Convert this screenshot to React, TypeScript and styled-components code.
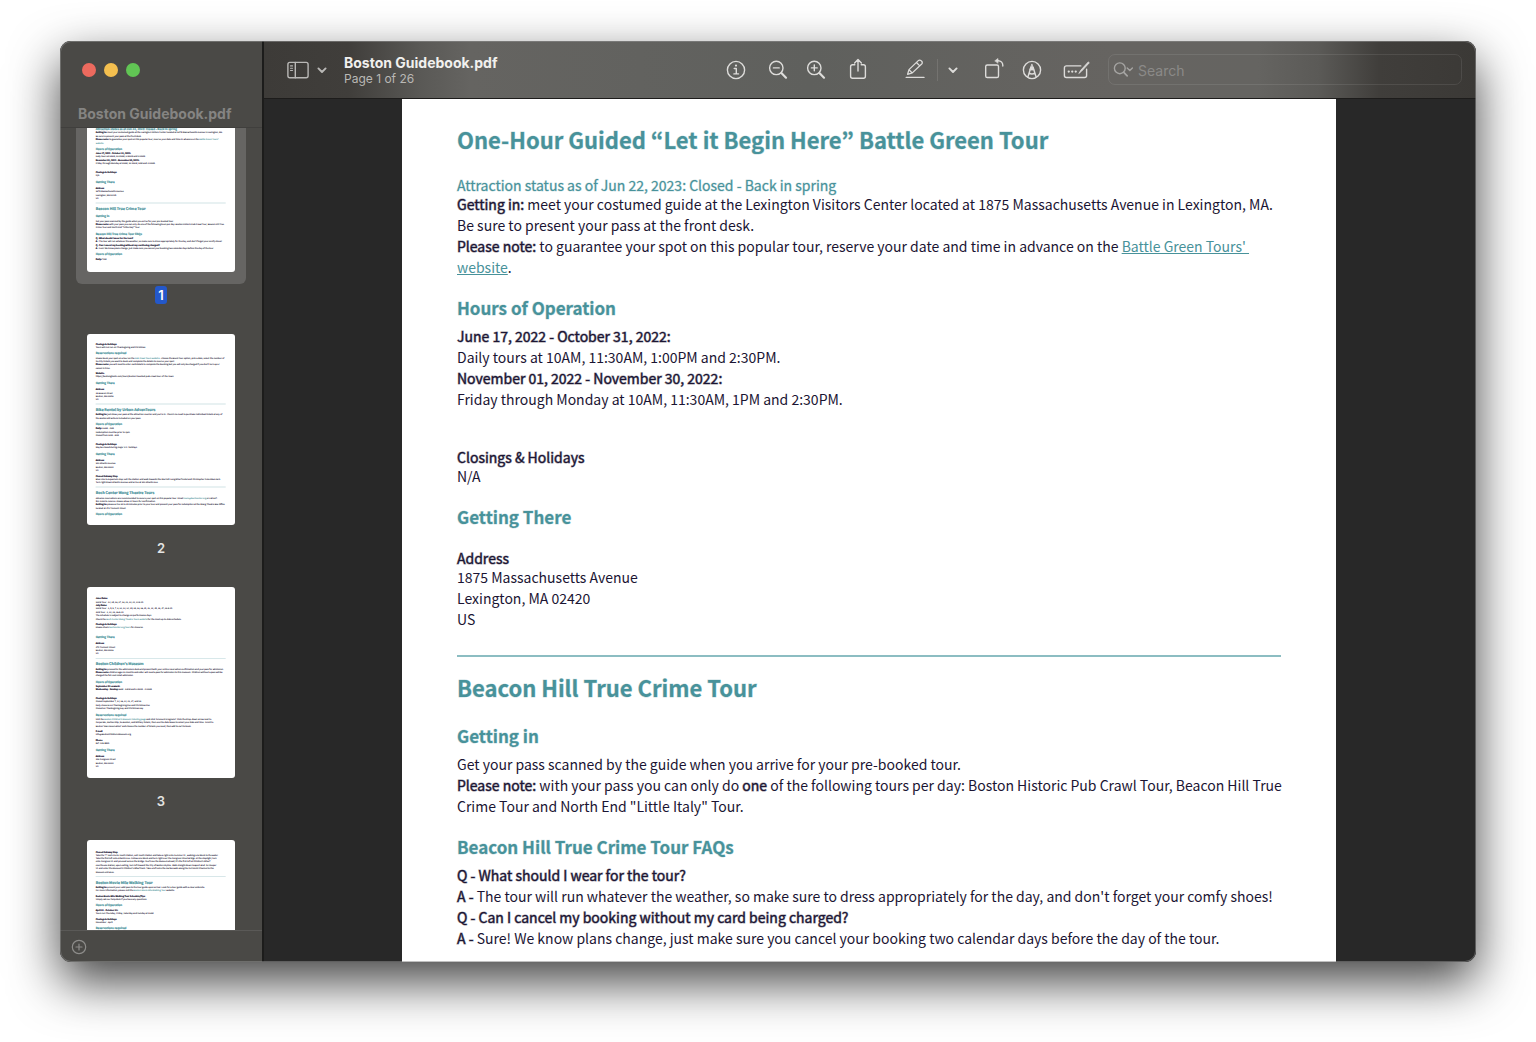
import React, { useLayoutEffect, useRef, useState } from "react";
import styled, { createGlobalStyle } from "styled-components";

const GlobalStyle = createGlobalStyle`
  * { box-sizing: border-box; }
  body { margin: 0; background: #fff; }
`;

const uiFont = `Inter, "Liberation Sans", sans-serif`;
const pageFont = `"Noto Sans CJK JP", "Noto Sans", sans-serif`;
const teal = "#48929a";
const ink = "#1b1533";

const Desktop = styled.div`
  height: 100vh;
  padding: 41px 60px 80px;
  font-family: ${uiFont};
  overflow: hidden;
`;

const Window = styled.div`
  position: relative;
  display: flex;
  height: 100%;
  border-radius: 11px;
  overflow: hidden;
  background: #282828;
`;

const Shadow = styled.div`
  height: 100%;
  border-radius: 11px;
  box-shadow: 0 20px 50px rgba(0, 0, 0, 0.74);
`;

const Rim = styled.div`
  position: absolute;
  inset: 0;
  border-radius: 11px;
  box-shadow: inset 0 0 0 1px rgba(140, 140, 140, 0.55);
  pointer-events: none;
`;

/* Sidebar */

const Sidebar = styled.aside`
  display: flex;
  flex-direction: column;
  flex: none;
  width: 204px;
  background: #4a4946;
  border-right: 2px solid #1c1c1b;
`;

const SidebarHeader = styled.header`
  display: flex;
  flex-direction: column;
  justify-content: space-between;
  height: 87px;
  padding: 22px 18px 3px;
  border-bottom: 1px solid #403f3d;
`;

const Lights = styled.div`
  display: flex;
  gap: 8px;
  padding-left: 4px;
`;

const Light = styled.button<{ $color: string }>`
  width: 14px;
  height: 14px;
  padding: 0;
  border: 0;
  border-radius: 50%;
  background: ${(p) => p.$color};
`;

const SidebarTitle = styled.div`
  font-size: 14px;
  font-weight: 700;
  line-height: 20px;
  color: #858482;
  white-space: nowrap;
`;

const ThumbList = styled.nav`
  flex: 1;
  min-height: 0;
  padding: 12px 16px 0 16px;
  overflow-y: auto;
  scrollbar-width: none;
`;

const ThumbItem = styled.button`
  display: flex;
  flex-direction: column;
  align-items: center;
  gap: 2px;
  width: 170px;
  height: 253px;
  padding: 0;
  border: 0;
  background: none;
  font-family: ${uiFont};
`;

const ThumbFrame = styled.span<{ $selected: boolean }>`
  display: block;
  width: 100%;
  padding: 12px 11px;
  border-radius: 6px;
  background: ${(p) => (p.$selected ? "#666563" : "transparent")};
`;

const ThumbPaper = styled.svg`
  display: block;
  width: 148px;
  height: 191px;
  border-radius: 3px;
  background: #fff;
  font-family: ${pageFont};
  text-rendering: geometricPrecision;
`;

const ThumbNumber = styled.span<{ $selected: boolean }>`
  padding: 0 3px;
  border-radius: 3px;
  font-size: 13px;
  font-weight: 600;
  line-height: 18px;
  color: ${(p) => (p.$selected ? "#fff" : "#e4e4e3")};
  background: ${(p) => (p.$selected ? "#2458ca" : "transparent")};
`;

const SidebarFooter = styled.footer`
  display: flex;
  align-items: center;
  height: 32px;
  padding-left: 11px;
  border-top: 1px solid #5a5957;
`;

const PlainButton = styled.button`
  display: flex;
  padding: 0;
  border: 0;
  background: none;
  color: #8d8c8a;
`;

/* Toolbar */

const Main = styled.main`
  display: flex;
  flex-direction: column;
  flex: 1;
  min-width: 0;
`;

const Toolbar = styled.header`
  display: flex;
  align-items: center;
  flex: none;
  height: 58px;
  padding: 0 14px 0 22px;
  border-bottom: 1px solid #1d1c1b;
  background: linear-gradient(
    90deg,
    #3d3b38 0%,
    #403e3b 7%,
    #5a5956 13%,
    #656461 17%,
    #5f605d 45%,
    #666461 70%,
    #656461 82%,
    #5b5a57 87%,
    #403e3b 92%,
    #3b3936 100%
  );
`;

const IconButton = styled.button<{ $width?: number }>`
  display: flex;
  align-items: center;
  justify-content: center;
  flex: none;
  width: ${(p) => p.$width ?? 24}px;
  height: 24px;
  padding: 0;
  border: 0;
  background: none;
  color: #dddcda;
`;

const ViewMenu = styled.div`
  display: flex;
  align-items: center;
  gap: 4px;

  button { color: #b9b8b6; }
`;

const DocName = styled.div`
  display: flex;
  flex-direction: column;
  padding-left: 14px;
  white-space: nowrap;
`;

const DocTitle = styled.span`
  font-size: 14px;
  font-weight: 700;
  line-height: 18px;
  color: #f1f0ee;
`;

const DocPage = styled.span`
  font-size: 12px;
  line-height: 14px;
  color: #b9b8b5;
`;

const Tools = styled.div`
  display: flex;
  align-items: center;
  gap: 18px;
  margin-left: auto;
  margin-right: 18px;
`;

const ToolPair = styled.div<{ $spaced?: boolean }>`
  display: flex;
  align-items: center;
  gap: 14px;
  margin-left: ${(p) => (p.$spaced ? 3 : 0)}px;
`;

const EditTools = styled.div`
  display: flex;
  align-items: center;
  gap: 7px;
  margin-left: 15px;
`;

const ToolDivider = styled.span`
  width: 1px;
  height: 22px;
  margin-left: 3px;
  background: #747370;
`;

const SearchBox = styled.label`
  display: flex;
  align-items: center;
  gap: 4px;
  flex: 0 1 354px;
  height: 31px;
  padding-left: 4px;
  border: 1px solid rgba(255, 255, 255, 0.09);
  border-radius: 7px;
  color: #a5a4a2;
`;

const SearchInput = styled.input`
  flex: 1;
  min-width: 0;
  padding: 3px 0 0;
  border: 0;
  outline: 0;
  background: none;
  color: #e8e7e5;
  font-family: ${uiFont};
  font-size: 14px;
  line-height: 20px;
  &::placeholder { color: #8b8a88; opacity: 1; }
`;

/* Document */

const Viewer = styled.div`
  flex: 1;
  min-height: 0;
  padding: 0 140px 0 138px;
  overflow-y: auto;
  scrollbar-width: none;
  background: #282828;
`;

const Page = styled.article`
  min-height: 100%;
  padding: 25px 55px 10px;
  background: #fff;
  color: ${ink};
  font-family: ${pageFont};
  font-size: 14px;
  line-height: 21px;
`;

/* The document sets its emphasis as thickened letters. */

const AttractionTitle = styled.h2`
  margin: 0;
  font-size: 22px;
  font-weight: 700;
  line-height: 30px;
  color: ${teal};
  -webkit-text-stroke: 1px rgba(72, 146, 154, 0.3);
`;

const SectionTitle = styled.h3`
  margin: 18px 0 6px;
  font-size: 17px;
  font-weight: 700;
  line-height: 24px;
  color: ${teal};
  -webkit-text-stroke: 1px rgba(72, 146, 154, 0.3);
`;

const Strong = styled.b`
  font-weight: 400;
  -webkit-text-stroke: 1px rgba(27, 21, 51, 0.5);
`;

const Status = styled.p`
  margin: 22px 0 0;
  line-height: 18px;
  color: ${teal};
  -webkit-text-stroke: 1px rgba(72, 146, 154, 0.3);
`;

const Label = styled.h4<{ $gap: number }>`
  margin: ${(p) => p.$gap}px 0 0;
  font-size: 14px;
  line-height: 18px;
`;

const Text = styled.p`
  margin: 0;
  white-space: nowrap;
`;

const Link = styled.a`
  color: ${teal};
  text-decoration: underline;
`;

const Rule = styled.hr`
  height: 2px;
  margin: 25px 0 15px;
  border: 0;
  background: #8cbdc2;
`;

const IntroTitle = styled(SectionTitle)`
  margin-top: 22px;
`;

/* Icons */

const line = { fill: "none", stroke: "currentColor", strokeWidth: 1.4, strokeLinecap: "round", strokeLinejoin: "round" } as const;

const Icon = ({ w = 24, h = 24, children }: { w?: number; h?: number; children: React.ReactNode }) => (
  <svg width={w} height={h} viewBox={`0 0 ${w} ${h}`} {...line} aria-hidden="true">{children}</svg>
);

const Chevron = () => (
  <Icon w={12}><path d="M2.4 10.4 6 14l3.6-3.6" strokeWidth={1.9} /></Icon>
);

const SidebarIcon = () => (
  <Icon>
    <rect x="1.9" y="4.4" width="20.2" height="15.4" rx="2" />
    <path d="M9.3 4.4v15.4" />
    <path d="M4.5 7.9h2M4.5 10.2h2M4.5 12.5h2" strokeWidth={1.1} />
  </Icon>
);

const InfoIcon = () => (
  <Icon>
    <circle cx="12" cy="12" r="8.6" />
    <path d="M10.2 10.5h2.1v5.3M9.9 15.9h4.6" />
    <circle cx="12" cy="7.6" r="1.1" fill="currentColor" stroke="none" />
  </Icon>
);

const ZoomIcon = ({ plus }: { plus?: boolean }) => (
  <Icon>
    <circle cx="10.3" cy="9.9" r="6.7" />
    <path d="M7.4 9.9h5.8" />
    {plus && <path d="M10.3 7v5.8" />}
    <path d="m15.4 15 4.6 4.7" strokeWidth={2.2} />
  </Icon>
);

const ShareIcon = () => (
  <Icon>
    <path d="M8.8 6.7H6.6a2 2 0 0 0-2 2v9.5a2 2 0 0 0 2 2h10.8a2 2 0 0 0 2-2V8.7a2 2 0 0 0-2-2h-2.2" />
    <path d="M12 13V1.7M8.6 5 12 1.6 15.4 5" />
  </Icon>
);

const HighlightIcon = () => (
  <Icon>
    <path d="M3.2 19.4h17.8" />
    <path d="M4.6 16.3 6 11.6 15.3 2.6a1.9 1.9 0 0 1 2.7 0l.7.7a1.9 1.9 0 0 1 0 2.7L9.3 14.9ZM6 11.7l3.2 3.2M13.4 4.5l3.4 3.4" strokeWidth={1.3} />
  </Icon>
);

const RotateIcon = () => (
  <Icon>
    <rect x="3.7" y="7" width="12.8" height="12.5" rx="1.6" />
    <path d="M14.8 2.7h1.4a4.6 4.6 0 0 1 4.6 4.6v.8" />
    <path d="m13 2.7 3-2.2v4.4Z" fill="currentColor" strokeWidth={0.6} />
  </Icon>
);

const MarkupIcon = () => (
  <Icon>
    <circle cx="12" cy="12" r="8.6" />
    <path d="m7.8 19.2 3.1-10M16.2 19.2l-3.1-10M9.3 15.2c1.6 1 3.8 1 5.4 0" />
    <path d="M12 6.3 13.9 12h-3.8Z" fill="currentColor" strokeWidth={0.8} />
  </Icon>
);

const SignIcon = () => (
  <Icon w={28}>
    <path d="M18.8 7.9H4.4a2 2 0 0 0-2 2v7.6a2 2 0 0 0 2 2h18.2a2 2 0 0 0 2-2v-6.2" />
    <path d="M6.7 13.6h.1M10.2 13.6h.1M13.7 13.6h.1" strokeWidth={2.2} />
    <path d="m17 15.2 1.9-3.1 7.4-8.2 1 .9-7.6 8.3Z" fill="currentColor" strokeWidth={0.8} />
  </Icon>
);

const SearchIcon = () => (
  <Icon w={21} h={18}>
    <circle cx="6.8" cy="7.3" r="5.4" />
    <path d="m10.8 11.3 3.4 3.6" strokeWidth={1.7} />
    <path d="m14.2 6.9 2.6 2.6 2.6-2.6" />
  </Icon>
);

const AddIcon = () => (
  <Icon w={16} h={16}>
    <circle cx="8" cy="8" r="6.7" strokeWidth={1.2} />
    <path d="M8 5v6M5 8h6" strokeWidth={1.2} />
  </Icon>
);

/* Thumbnails: each entry is one printed line of the page, three units to a pixel. */

type Kind = "title" | "section" | "bold" | "text" | "rule";
type Row = [y: number, kind: Kind, body: string, lead?: string, link?: string, rest?: string];

const pages: Row[][] = [
  [
    [147, "section", "Attraction status as of Jun 22, 2023: Closed - Back in spring"],
    [156, "text", "meet your costumed guide at the Lexington Visitors Center located at 1875 Massachusetts Avenue in Lexington, MA.", "Getting in: "],
    [166, "text", "Be sure to present your pass at the front desk."],
    [176, "text", "to guarantee your spot on this popular tour, reserve your date and time in advance on the ", "Please note: ", "Battle Green Tours'"],
    [187, "text", "", "", "website."],
    [206, "section", "Hours of Operation"],
    [218, "bold", "June 17, 2022 - October 31, 2022:"],
    [228, "text", "Daily tours at 10AM, 11:30AM, 1:00PM and 2:30PM."],
    [238, "bold", "November 01, 2022 - November 30, 2022:"],
    [248, "text", "Friday through Monday at 10AM, 11:30AM, 1PM and 2:30PM."],
    [276, "bold", "Closings & Holidays"],
    [285, "text", "N/A"],
    [304, "section", "Getting There"],
    [323, "bold", "Address"],
    [333, "text", "1875 Massachusetts Avenue"],
    [343, "text", "Lexington, MA 02420"],
    [353, "text", "US"],
    [366, "rule", ""],
    [386, "title", "Beacon Hill True Crime Tour"],
    [408, "section", "Getting in"],
    [421, "text", "Get your pass scanned by the guide when you arrive for your pre-booked tour."],
    [431, "text", "with your pass you can only do one of the following tours per day: Boston Historic Pub Crawl Tour, Beacon Hill True", "Please note: "],
    [441, "text", "Crime Tour and North End \"Little Italy\" Tour."],
    [460, "section", "Beacon Hill True Crime Tour FAQs"],
    [473, "bold", "Q - What should I wear for the tour?"],
    [483, "text", "The tour will run whatever the weather, so make sure to dress appropriately for the day, and don't forget your comfy shoes!", "A - "],
    [493, "bold", "Q - Can I cancel my booking without my card being charged?"],
    [503, "text", "Sure! We know plans change, just make sure you cancel your booking two calendar days before the day of the tour.", "A - "],
    [522, "section", "Hours of Operation"],
    [535, "text", "7PM", "Daily: "],
  ],
  [
    [32, "bold", "Closings & Holidays"],
    [42, "text", "Tours will not run on Thanksgiving and Christmas."],
    [60, "section", "Reservations required"],
    [73, "text", "Please book your spot on a tour on the ", "", "Pub Crawl Tours website", " - choose the Book Tour option, pick a date, select the number of"],
    [83, "text", "Go City tickets you want to book and complete the details to reserve your spot."],
    [93, "text", "you will need to enter card details to complete the booking but you will only be charged if you don't turn up or", "Please note: "],
    [103, "text", "cancel in time."],
    [120, "bold", "Website"],
    [129, "text", "https://bostonghosts.com/tours/boston-haunted-pub-crawl-tour-of-the-town"],
    [149, "section", "Getting There"],
    [168, "bold", "Address"],
    [178, "text", "28 Beacon Street"],
    [188, "text", "Boston, MA 02108"],
    [198, "text", "US"],
    [210, "rule", ""],
    [231, "title", "Bike Rental by Urban AdvenTours"],
    [243, "text", "just show your pass at the attraction counter and you're in - there's no need to purchase individual tickets at any of", "Getting in: "],
    [254, "text", "the Boston attractions included on your pass."],
    [273, "section", "Hours of Operation"],
    [285, "text", "11AM - 4PM", "Daily: "],
    [296, "text", "Redemption must be prior to 4pm"],
    [306, "text", "Closed from 1PM - 2PM"],
    [333, "bold", "Closings & Holidays"],
    [342, "text", "May be closed during major U.S. holidays"],
    [361, "section", "Getting There"],
    [381, "bold", "Address"],
    [390, "text", "103 Atlantic Avenue"],
    [400, "text", "Boston, MA 02110"],
    [410, "text", "US"],
    [427, "bold", "Closest Subway Stop"],
    [436, "text", "Blue Line to Aquarium stop: exit the station and walk towards the Marriott Long Wharf Hotel and Christopher Columbus Park."],
    [447, "text", "Turn right down Atlantic Avenue and arrive at 103 Atlantic Ave."],
    [459, "rule", ""],
    [480, "title", "Boch Center Wang Theatre Tours"],
    [493, "text", "Advance reservations are recommended to secure your spot on this popular tour. Email ", "", "tours@bochcenter.org", " or call 617-"],
    [503, "text", "532-1282 to reserve. Please allow 24 hours for confirmation."],
    [513, "text", "please arrive 10 to 15 minutes prior to your tour and present your pass for redemption at the Wang Theatre Box Office", "Getting in: "],
    [523, "text", "located at 270 Tremont Street."],
    [542, "section", "Hours of Operation"],
  ],
  [
    [36, "bold", "June Dates"],
    [46, "text", "12PM Tour - 14, 15, 16, 17, 18, 21, 22, 23, 24 & 30"],
    [56, "bold", "July Dates"],
    [66, "text", "12PM Tour - 1, 5, 6, 7, 8, 12, 13, 14, 15, 16, 18, 19, 20, 21, 22, 25, 26, 27, 28 & 30"],
    [76, "text", "2PM Tour - 2, 23, 28, 29 & 30"],
    [87, "text", "The schedule is subject to change on performance days."],
    [97, "text", "Check the ", "", "Boch Center Wang Theatre Tours website", " for the most up-to-date schedule."],
    [113, "bold", "Closings & Holidays"],
    [123, "text", "Please check ", "", "bochcenter.org/tours", " for closures."],
    [151, "section", "Getting There"],
    [171, "bold", "Address"],
    [181, "text", "270 Tremont Street"],
    [191, "text", "Boston, MA 02116"],
    [201, "text", "US"],
    [214, "rule", ""],
    [234, "title", "Boston Children's Museum"],
    [247, "text", "proceed to the admissions desk and present both your online reservation confirmation and your pass for admission.", "Getting in: "],
    [257, "text", "children ages 11 months and older will need a pass for admission to this museum. Children without a pass will be", "Please note: "],
    [267, "text", "charged the full-cost retail admission."],
    [286, "section", "Hours of Operation"],
    [298, "bold", "September 01 onward:"],
    [309, "text", "9AM - 12PM and 1:30PM - 4:30PM", "Wednesday - Sunday: "],
    [336, "bold", "Closings & Holidays"],
    [345, "text", "Closed September 7, 14, 19, 24, 21, 27, and 28"],
    [355, "text", "Early closures on Thanksgiving Eve and Christmas Eve"],
    [366, "text", "Closed on Thanksgiving Day and Christmas Day"],
    [385, "section", "Reservations required"],
    [398, "text", "Visit the ", "", "Boston Children's Museum ticketing page", " and click 'Discount Programs'. Click the drop-down arrow next to"],
    [408, "text", "Corporate, Partnership, Go Boston, and Military tickets, then use the date boxes to select your date and time. Scroll to"],
    [418, "text", "Boston 'Pass Reservation' and choose the number of tickets you need, then add to cart to book."],
    [435, "bold", "E-mail"],
    [444, "text", "Info@BostonChildrensMuseum.org"],
    [461, "bold", "Phone"],
    [471, "text", "617-426-6500"],
    [490, "section", "Getting There"],
    [509, "bold", "Address"],
    [519, "text", "308 Congress Street"],
    [529, "text", "Boston, MA 02210"],
    [539, "text", "US"],
  ],
  [
    [37, "bold", "Closest Subway Stop"],
    [46, "text", "Take the 'T' Red Line to South Station, exit South Station and take a right onto Summer St., walking one block to the water."],
    [56, "text", "Take the first left onto Atlantic Ave. Follow one block and turn right over the Congress Street Bridge. At the stoplight, turn"],
    [66, "text", "onto Congress St. and proceed across the bridge. You'll see the Museum ahead; it's the first left at Children's Wharf"],
    [76, "text", "courthouse station; upon exiting, turn left toward the City of Boston skyline. Walk straight down Seaport Blvd. to Sleeper"],
    [86, "text", "St. and enter the Museum's Children's Wharf Park. Take a left onto the Harborwalk along the Fort Point Channel to the"],
    [97, "text", "Museum entrance."],
    [110, "rule", ""],
    [131, "title", "Boston Movie Mile Walking Tour"],
    [143, "text", "present your valid pass to the tour guide upon arrival. Look for a tour guide with a clear umbrella.", "Getting in: "],
    [153, "text", "For more information, please visit the ", "", "Boston Movie Mile Walking Tour", " website."],
    [170, "bold", "Boston Movie Mile Walking Tour Schedule/Tips"],
    [179, "text", "Simply ask our help desk if you have any questions."],
    [198, "section", "Hours of Operation"],
    [211, "bold", "April 01 - October 31:"],
    [221, "text", "Tours run Thursday, Friday, Saturday and Sunday at 11AM"],
    [238, "bold", "Closings & Holidays"],
    [247, "text", "November - April"],
    [266, "section", "Reservations required"],
  ],
];

const size: Record<Kind, number> = { title: 22, section: 17, bold: 13, text: 13, rule: 0 };

const Thumbnail = ({ rows }: { rows: Row[] }) => (
  <ThumbPaper viewBox="0 0 888 1146" aria-hidden="true">
    {rows.map(([y, kind, body, lead, link, rest]) => {
      if (kind === "rule") {
        return <path key={y} d={`M52 ${y * 2}h780`} stroke={teal} strokeWidth="3" opacity="0.5" />;
      }
      const color = kind === "title" || kind === "section" ? teal : ink;
      return (
        <text
          key={y}
          x="52"
          y={y * 2 + 1}
          fontSize={size[kind]}
          fontWeight={kind === "text" ? 400 : 700}
          fill={color}
          stroke={color}
          strokeWidth={kind === "text" ? 0.4 : 1}
        >
          {lead && <tspan fontWeight="700" strokeWidth="1">{lead}</tspan>}
          {body}
          {link && <tspan fill={teal} stroke={teal}>{link}</tspan>}
          {rest}
        </text>
      );
    })}
  </ThumbPaper>
);

export default function App() {
  const list = useRef<HTMLElement>(null);
  const [selected, setSelected] = useState(0);

  useLayoutEffect(() => {
    if (list.current) list.current.scrollTop = 71;
  }, []);

  return (
    <Desktop>
      <GlobalStyle />
      <Shadow>
        <Window>
          <Sidebar>
            <SidebarHeader>
              <Lights>
                <Light $color="#ed6a5e" aria-label="Close" />
                <Light $color="#f4bf4f" aria-label="Minimize" />
                <Light $color="#61c554" aria-label="Zoom" />
              </Lights>
              <SidebarTitle>Boston Guidebook.pdf</SidebarTitle>
            </SidebarHeader>
            <ThumbList ref={list} aria-label="Pages">
              {pages.map((rows, i) => (
                <ThumbItem key={i} onClick={() => setSelected(i)}>
                  <ThumbFrame $selected={i === selected}>
                    <Thumbnail rows={rows} />
                  </ThumbFrame>
                  <ThumbNumber $selected={i === selected}>{i + 1}</ThumbNumber>
                </ThumbItem>
              ))}
            </ThumbList>
            <SidebarFooter>
              <PlainButton aria-label="Add page"><AddIcon /></PlainButton>
            </SidebarFooter>
          </Sidebar>

          <Main>
            <Toolbar>
              <ViewMenu>
                <IconButton aria-label="Sidebar"><SidebarIcon /></IconButton>
                <IconButton $width={16} aria-label="View options"><Chevron /></IconButton>
              </ViewMenu>
              <DocName>
                <DocTitle>Boston Guidebook.pdf</DocTitle>
                <DocPage>Page 1 of 26</DocPage>
              </DocName>
              <Tools>
                <IconButton aria-label="Info"><InfoIcon /></IconButton>
                <ToolPair>
                  <IconButton aria-label="Zoom out"><ZoomIcon /></IconButton>
                  <IconButton aria-label="Zoom in"><ZoomIcon plus /></IconButton>
                </ToolPair>
                <IconButton aria-label="Share"><ShareIcon /></IconButton>
                <EditTools>
                  <IconButton aria-label="Highlight"><HighlightIcon /></IconButton>
                  <ToolDivider />
                  <IconButton $width={16} aria-label="Highlight colours"><Chevron /></IconButton>
                </EditTools>
                <ToolPair $spaced>
                  <IconButton aria-label="Rotate"><RotateIcon /></IconButton>
                  <IconButton aria-label="Markup"><MarkupIcon /></IconButton>
                </ToolPair>
                <IconButton $width={28} aria-label="Fill in form"><SignIcon /></IconButton>
              </Tools>
              <SearchBox>
                <SearchIcon />
                <SearchInput type="text" placeholder="Search" aria-label="Search" />
              </SearchBox>
            </Toolbar>

            <Viewer>
              <Page>
                <AttractionTitle>One-Hour Guided “Let it Begin Here” Battle Green Tour</AttractionTitle>
                <Status>Attraction status as of Jun 22, 2023: Closed - Back in spring</Status>
                <Text>
                  <Strong>Getting in:</Strong> meet your costumed guide at the Lexington Visitors Center located at 1875 Massachusetts Avenue in Lexington, MA.<br />
                  Be sure to present your pass at the front desk.
                </Text>
                <Text>
                  <Strong>Please note:</Strong> to guarantee your spot on this popular tour, reserve your date and time in advance on the{" "}
                  <Link href="#tours">Battle Green Tours'&nbsp;<br />website</Link>.
                </Text>
                <SectionTitle>Hours of Operation</SectionTitle>
                <Text><Strong>June 17, 2022 - October 31, 2022:</Strong></Text>
                <Text>Daily tours at 10AM, 11:30AM, 1:00PM and 2:30PM.</Text>
                <Text><Strong>November 01, 2022 - November 30, 2022:</Strong></Text>
                <Text>Friday through Monday at 10AM, 11:30AM, 1PM and 2:30PM.</Text>
                <Label $gap={38}><Strong>Closings &amp; Holidays</Strong></Label>
                <Text>N/A</Text>
                <SectionTitle>Getting There</SectionTitle>
                <Label $gap={20}><Strong>Address</Strong></Label>
                <Text>1875 Massachusetts Avenue</Text>
                <Text>Lexington, MA 02420</Text>
                <Text>US</Text>
                <Rule />
                <AttractionTitle>Beacon Hill True Crime Tour</AttractionTitle>
                <IntroTitle>Getting in</IntroTitle>
                <Text>Get your pass scanned by the guide when you arrive for your pre-booked tour.</Text>
                <Text>
                  <Strong>Please note:</Strong> with your pass you can only do <Strong>one</Strong> of the following tours per day: Boston Historic Pub Crawl Tour, Beacon Hill True<br />
                  Crime Tour and North End "Little Italy" Tour.
                </Text>
                <SectionTitle>Beacon Hill True Crime Tour FAQs</SectionTitle>
                <Text><Strong>Q - What should I wear for the tour?</Strong></Text>
                <Text><Strong>A -</Strong> The tour will run whatever the weather, so make sure to dress appropriately for the day, and don't forget your comfy shoes!</Text>
                <Text><Strong>Q - Can I cancel my booking without my card being charged?</Strong></Text>
                <Text><Strong>A -</Strong> Sure! We know plans change, just make sure you cancel your booking two calendar days before the day of the tour.</Text>
              </Page>
            </Viewer>
          </Main>
          <Rim />
        </Window>
      </Shadow>
    </Desktop>
  );
}
